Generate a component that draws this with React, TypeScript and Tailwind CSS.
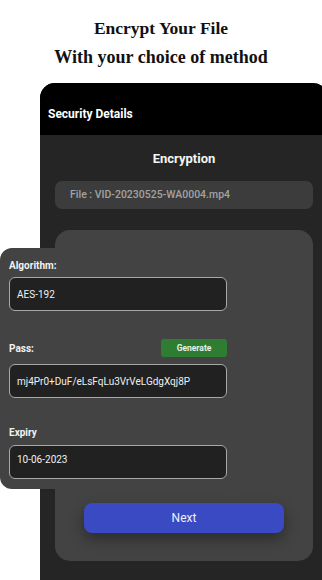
import React from "react";

const appFont = { fontFamily: "Roboto, 'Noto Sans', sans-serif" };

function Field({
  label,
  value,
  action,
  className,
  inputClass,
}: {
  label: string;
  value: string;
  action?: React.ReactNode;
  className?: string;
  inputClass?: string;
}) {
  return (
    <div className={className}>
      <div className="flex items-center justify-between h-[20px] w-[218px]">
        <span className="text-[10px] font-bold text-[#f2f2f2]">{label}</span>
        {action}
      </div>
      <div className={`h-[34px] w-[218px] rounded-[6px] border border-[#a8a8a8] bg-[#212121] px-[7px] text-[10px] text-[#f0f0f0] ${inputClass ?? ""}`}>
        {value}
      </div>
    </div>
  );
}

export default function App() {
  return (
    <div className="relative w-[322px] h-[580px] overflow-hidden bg-white">
      <div className="pt-[15px] text-center text-[#111] font-bold" style={{ fontFamily: "'Liberation Serif', serif" }}>
        <div className="text-[17.5px] leading-[26px]">Encrypt Your File</div>
        <div className="mt-[3px] text-[18px] leading-[26px]">With your choice of method</div>
      </div>

      <div className="ml-[40px] mt-[13px] w-[288px] h-[520px] rounded-t-[15px] overflow-hidden bg-[#252525]" style={appFont}>
        <div className="h-[52px] bg-black flex items-center pl-[8px] pt-[9px]">
          <span className="text-[12px] font-bold text-white">Security Details</span>
        </div>
        <div className="px-[15px]">
          <div className="pt-[15px] text-center text-[13px] font-bold text-[#f4f4f4] leading-[18px]">Encryption</div>
          <div className="mt-[13px] h-[28px] rounded-[7px] bg-[#3c3c3c] flex items-center pl-[15px] text-[10.5px] font-medium text-[#a3a3a3]">
            File : VID-20230525-WA0004.mp4
          </div>
          <div className="mt-[21px] h-[331px] rounded-[15px] bg-[#434343] flex flex-col items-center justify-end pb-[28px]">
            <button className="h-[30px] w-[200px] rounded-[8px] bg-[#3a4ac2] text-[12px] text-[#eef0ff] shadow-[0_6px_14px_rgba(0,0,0,0.35)]">
              Next
            </button>
          </div>
        </div>
      </div>

      <div className="absolute left-0 top-[248px] w-[240px] h-[241px] rounded-[12px] bg-[#434343] px-[9px] pt-[7px]" style={appFont}>
        <Field label="Algorithm:" value="AES-192" inputClass="mt-[2px] flex items-center" />
        <Field
          className="mt-[27px]"
          label="Pass:"
          value="mj4Pr0+DuF/eLsFqLu3VrVeLGdgXqj8P"
          inputClass="mt-[6px] flex items-center"
          action={
            <span className="h-[18px] w-[66px] rounded-[3px] bg-[#2e7d32] flex items-center justify-center text-[8.5px] font-bold text-[#e6efe6]">
              Generate
            </span>
          }
        />
        <Field className="mt-[24px]" label="Expiry" value="10-06-2023" inputClass="mt-[3px] pt-[6px]" />
      </div>
    </div>
  );
}
